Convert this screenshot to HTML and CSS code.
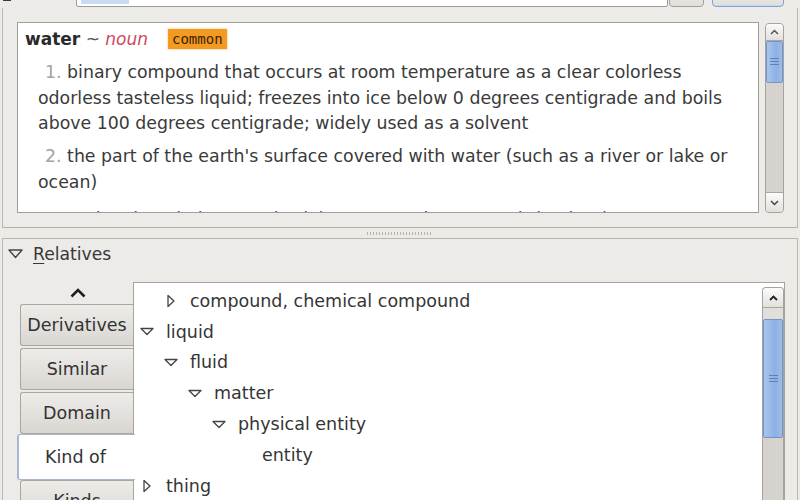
FILE: index.html
```html
<!DOCTYPE html>
<html>
<head>
<meta charset="utf-8">
<link rel="stylesheet" href="styles.css">
</head>
<body>
<div class="win">
  <div class="toolbar">
    <div class="tb-icon"></div>
    <div class="entry"><span class="sel"></span></div>
    <div class="btn small"></div>
    <div class="btn deflt"></div>
  </div>

  <div class="pane top-pane">
    <div class="defrow">
      <div class="defview">
        <div class="hdr"><b class="word">water</b> <span class="tilde">~</span> <i class="pos">noun</i><span class="tag">common</span></div>
        <p class="sense"><span class="num">1.</span> binary compound that occurs at room temperature as a clear colorless odorless tasteless liquid; freezes into ice below 0 degrees centigrade and boils above 100 degrees centigrade; widely used as a solvent</p>
        <p class="sense"><span class="num">2.</span> the part of the earth's surface covered with water (such as a river or lake or ocean)</p>
        <p class="sense ex">“they invaded our territorial waters”; “they were sitting by the water's edge”</p>
      </div>
      <div class="vscroll def-scroll">
        <div class="sbtn"><svg width="9" height="6" viewBox="0 0 9 6"><path d="M1 5 L4.5 1.5 L8 5" fill="none" stroke="#555" stroke-width="1.5"/></svg></div>
        <div class="thumb t1"><span class="grip"></span></div>
        <div class="trough"></div>
        <div class="sbtn"><svg width="9" height="6" viewBox="0 0 9 6"><path d="M1 1 L4.5 4.5 L8 1" fill="none" stroke="#444" stroke-width="1.5"/></svg></div>
      </div>
    </div>
  </div>

  <div class="handle"><div class="dots"></div></div>

  <div class="pane bottom-pane">
    <div class="expander">
      <svg class="exp-arrow" width="15" height="10" viewBox="0 0 15 10"><polygon points="1,1 14,1 7.5,8.5" fill="none" stroke="#444" stroke-width="1.4" stroke-linejoin="round"/></svg>
      <span class="exp-label"><u>R</u>elatives</span>
    </div>
    <div class="rel">
      <div class="tabs">
        <div class="tabs-up"><svg width="16" height="10" viewBox="0 0 16 10"><path d="M1.5 8.5 L8 2 L14.5 8.5" fill="none" stroke="#1e1e1e" stroke-width="2.6"/></svg></div>
        <div class="tab">Derivatives</div>
        <div class="tab">Similar</div>
        <div class="tab">Domain</div>
        <div class="tab active">Kind of</div>
        <div class="tab">Kinds</div>
      </div>
      <div class="tree">
        <div class="rows">
          <div class="row l1"><svg class="arr" width="9" height="14" viewBox="0 0 9 14"><polygon points="1.5,1.5 7.5,7 1.5,12.5" fill="none" stroke="#444" stroke-width="1.3" stroke-linejoin="round"/></svg><span>compound, chemical compound</span></div>
          <div class="row l0"><svg class="arr" width="14" height="9" viewBox="0 0 14 9"><polygon points="1,1.5 13,1.5 7,7.5" fill="none" stroke="#444" stroke-width="1.3" stroke-linejoin="round"/></svg><span>liquid</span></div>
          <div class="row l1"><svg class="arr" width="14" height="9" viewBox="0 0 14 9"><polygon points="1,1.5 13,1.5 7,7.5" fill="none" stroke="#444" stroke-width="1.3" stroke-linejoin="round"/></svg><span>fluid</span></div>
          <div class="row l2"><svg class="arr" width="14" height="9" viewBox="0 0 14 9"><polygon points="1,1.5 13,1.5 7,7.5" fill="none" stroke="#444" stroke-width="1.3" stroke-linejoin="round"/></svg><span>matter</span></div>
          <div class="row l3"><svg class="arr" width="14" height="9" viewBox="0 0 14 9"><polygon points="1,1.5 13,1.5 7,7.5" fill="none" stroke="#444" stroke-width="1.3" stroke-linejoin="round"/></svg><span>physical entity</span></div>
          <div class="row l4"><span class="arr-empty"></span><span>entity</span></div>
          <div class="row l0"><svg class="arr" width="9" height="14" viewBox="0 0 9 14"><polygon points="1.5,1.5 7.5,7 1.5,12.5" fill="none" stroke="#444" stroke-width="1.3" stroke-linejoin="round"/></svg><span>thing</span></div>
        </div>
        <div class="vscroll tree-scroll">
          <div class="sbtn tall"><svg width="9" height="6" viewBox="0 0 9 6"><path d="M1 5 L4.5 1.5 L8 5" fill="none" stroke="#222" stroke-width="1.8"/></svg></div>
          <div class="trough pre"></div>
          <div class="thumb t2"><span class="grip"></span></div>
          <div class="trough"></div>
        </div>
      </div>
    </div>
  </div>
</div>
</body>
</html>
```

FILE: styles.css
```css
* { box-sizing: border-box; }
html, body { margin: 0; padding: 0; }
body {
  width: 800px;
  height: 500px;
  overflow: hidden;
  background: #edebe8;
  font-family: "DejaVu Sans", "Liberation Sans", sans-serif;
  color: #383838;
}
.win { display: flex; flex-direction: column; height: 500px; }

/* toolbar (only bottom strip visible) */
.toolbar {
  height: 8px;
  flex: none;
  display: flex;
  align-items: flex-end;
  overflow: hidden;
  padding-bottom: 1px;
}
.tb-icon {
  width: 8px; height: 30px; margin-left: 3px;
  background: #3a3a3a;
  margin-bottom: 6px;
}
.entry {
  margin-left: 65px;
  width: 592px; height: 30px;
  background: #fff;
  border: 1px solid #9e9a95;
  border-radius: 0 0 2px 2px;
  position: relative;
}
.sel {
  position: absolute; left: 4px; bottom: 2px;
  width: 48px; height: 24px;
  background: #c9dbf2;
}
.btn {
  height: 30px;
  border: 1px solid #a39f99;
  border-radius: 0 0 4px 4px;
  background: linear-gradient(#f4f3f1, #e2dfdb);
}
.btn.small { width: 35px; margin-left: 1px; }
.btn.deflt { width: 72px; margin-left: 8px; border-color: #7ea3d6; box-shadow: inset 0 -1px 0 #c8daf2; }

/* panes */
.pane {
  margin: 0 2px 0 2px;
  border-left: 1px solid #bdb9b4;
  border-right: 1px solid #bdb9b4;
}
.top-pane {
  height: 220px;
  flex: none;
  border-bottom: 1px solid #b3afa9;
  padding: 14px 13px 0 14px;
}
.defrow { display: flex; height: 191px; gap: 6px; }
.defview {
  flex: 1;
  background: #fff;
  border: 1px solid #a29e99;
  padding: 4px 10px 0 7px;
  overflow: hidden;
  font-size: 17.35px;
  line-height: 25.5px;
  color: #3a3a3a;
}
.hdr { margin: 0 0 8px 0; line-height: 25px; font-size: 17px; }
.word { font-weight: bold; color: #2a2a2a; }
.tilde { color: #555; }
.pos { color: #cc4a5c; }
.tag {
  display: inline-block;
  margin-left: 20px;
  font-family: "DejaVu Sans Mono", "Liberation Mono", monospace;
  font-size: 14px;
  line-height: 20px;
  padding: 0 4px;
  background: #f29a22;
  color: #3b2406;
  box-shadow: 0 0 2px #f6b257;
  vertical-align: 1px;
}
.sense { margin: 0 0 7.5px 13px; text-indent: 7px; }
.num { color: #a3a3a3; }
.ex { color: #3743a6; text-indent: 42px; margin-top: 12px; }

/* scrollbars */
.vscroll {
  flex: none;
  display: flex;
  flex-direction: column;
  border: 1px solid #a6a29c;
  border-radius: 4px;
  background: #d7d4d0;
  overflow: hidden;
}
.def-scroll { width: 19px; margin-top: 1px; }
.sbtn {
  height: 17px;
  flex: none;
  display: flex; align-items: center; justify-content: center;
  background: linear-gradient(#fbfbfa, #e3e0dc);
  border-bottom: 1px solid #aaa6a0;
}
.sbtn:last-child { border-bottom: none; border-top: 1px solid #aaa6a0; height: 20px; }
.sbtn.tall { height: 20px; }
.trough { flex: 1; background: #d6d3cf; }
.trough.pre { flex: none; height: 11px; background: #e2dfdb; }
.thumb {
  flex: none;
  display: flex; align-items: center; justify-content: center;
  background: linear-gradient(to right, #a9c5ec, #8db1e3 60%, #9dbce8);
  border: 1px solid #6f95cb;
  border-radius: 2px;
}
.t1 { height: 42px; }
.t2 { height: 119px; }
.grip {
  width: 9px; height: 8px;
  background: repeating-linear-gradient(#4f74aa 0 1px, transparent 1px 3px);
  opacity: .8;
}

/* handle */
.handle {
  height: 10px;
  flex: none;
  display: flex; align-items: center; justify-content: center;
}
.dots {
  width: 66px; height: 3px;
  background: repeating-linear-gradient(to right, #9d9994 0 1px, transparent 1px 3px);
  opacity: .7;
}

/* bottom pane */
.bottom-pane {
  flex: 1;
  border-top: 1px solid #b9b5b0;
  display: flex;
  flex-direction: column;
  min-height: 0;
}
.expander {
  height: 43px;
  flex: none;
  display: flex;
  align-items: flex-start;
  padding-top: 1px;
  line-height: 28px;
  font-size: 17.2px;
  color: #383838;
}
.exp-arrow { margin: 9px 0 0 5px; }
.exp-label { margin-left: 10px; }
.exp-label u { text-underline-offset: 3px; }

.rel {
  flex: 1;
  display: flex;
  padding: 0 12px 0 14px;
  min-height: 0;
}
.tabs {
  width: 116px;
  flex: none;
  display: flex;
  flex-direction: column;
  position: relative;
  z-index: 1;
}
.tabs-up {
  height: 22px;
  flex: none;
  display: flex; justify-content: center; align-items: center;
  padding-left: 6px;
}
.tab {
  flex: none;
  height: 42px;
  margin: 0 0 2px 3px;
  display: flex; align-items: center; justify-content: center;
  font-size: 17.5px;
  color: #333;
  background: linear-gradient(#eeece9, #d9d6d2);
  border: 1px solid #aaa6a0;
  border-right: none;
  border-radius: 3px 0 0 3px;
}
.tab.active {
  height: 46px;
  margin: -2px -2px 0 0;
  background: #fff;
  border-left: 2px solid #8cacd8;
  border-color: #a8b8cf;
  padding-right: 3px;
}

.tree {
  flex: 1;
  display: flex;
  background: #fff;
  border: 1px solid #a6a29d;
  border-bottom: none;
  min-height: 0;
}
.rows {
  flex: 1;
  padding-top: 2.5px;
  font-size: 17.5px;
  color: #353535;
}
.row {
  height: 30.8px;
  display: flex;
  align-items: center;
  white-space: nowrap;
}
.row .arr, .row .arr-empty {
  width: 26px;
  flex: none;
  margin-right: 6px;
}
.row svg.arr { width: 26px; }
.l0 { padding-left: 0; }
.l1 { padding-left: 24px; }
.l2 { padding-left: 48px; }
.l3 { padding-left: 72px; }
.l4 { padding-left: 96px; }
.tree-scroll {
  width: 22px;
  margin-top: 4px;
  border-bottom: none;
  border-radius: 4px 4px 0 0;
}
```
